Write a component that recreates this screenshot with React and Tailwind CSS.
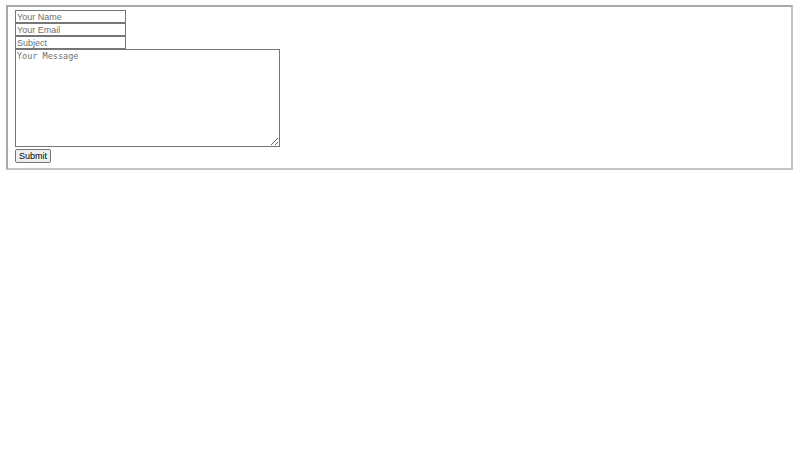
export default function App() {
  return (
    <div className="pt-[5px] pl-[6px] pr-[7px] font-['Liberation_Sans',Arial,sans-serif]">
      <form className="border-2 border-[#c4c4c4] border-t-[#a8a8a8] border-l-[#a8a8a8] pt-[3px] pl-[7px] pb-[5px]">
        <input
          type="text"
          placeholder="Your Name"
          className="block w-[111px] h-[13px] border border-[#767676] px-[1px] text-[9px] leading-none text-black placeholder:text-[#6f6f6f] outline-none"
        />
        <input
          type="email"
          placeholder="Your Email"
          className="block w-[111px] h-[13px] border border-[#767676] px-[1px] text-[9px] leading-none text-black placeholder:text-[#6f6f6f] outline-none"
        />
        <input
          type="text"
          placeholder="Subject"
          className="block w-[111px] h-[13px] border border-[#767676] px-[1px] text-[9px] leading-none text-black placeholder:text-[#6f6f6f] outline-none"
        />
        <textarea
          placeholder="Your Message"
          className="block w-[265px] h-[98px] border border-[#767676] px-[1px] py-[1px] font-['DejaVu_Sans_Mono','Liberation_Mono',monospace] text-[8.5px] leading-[11px] text-black placeholder:text-[#6f6f6f] outline-none"
        />
        <button
          type="submit"
          className="block mt-[2px] w-[36px] h-[14px] border border-[#767676] rounded-[2px] bg-[#efefef] text-[9px] font-normal leading-none text-black"
        >
          Submit
        </button>
      </form>
    </div>
  );
}
